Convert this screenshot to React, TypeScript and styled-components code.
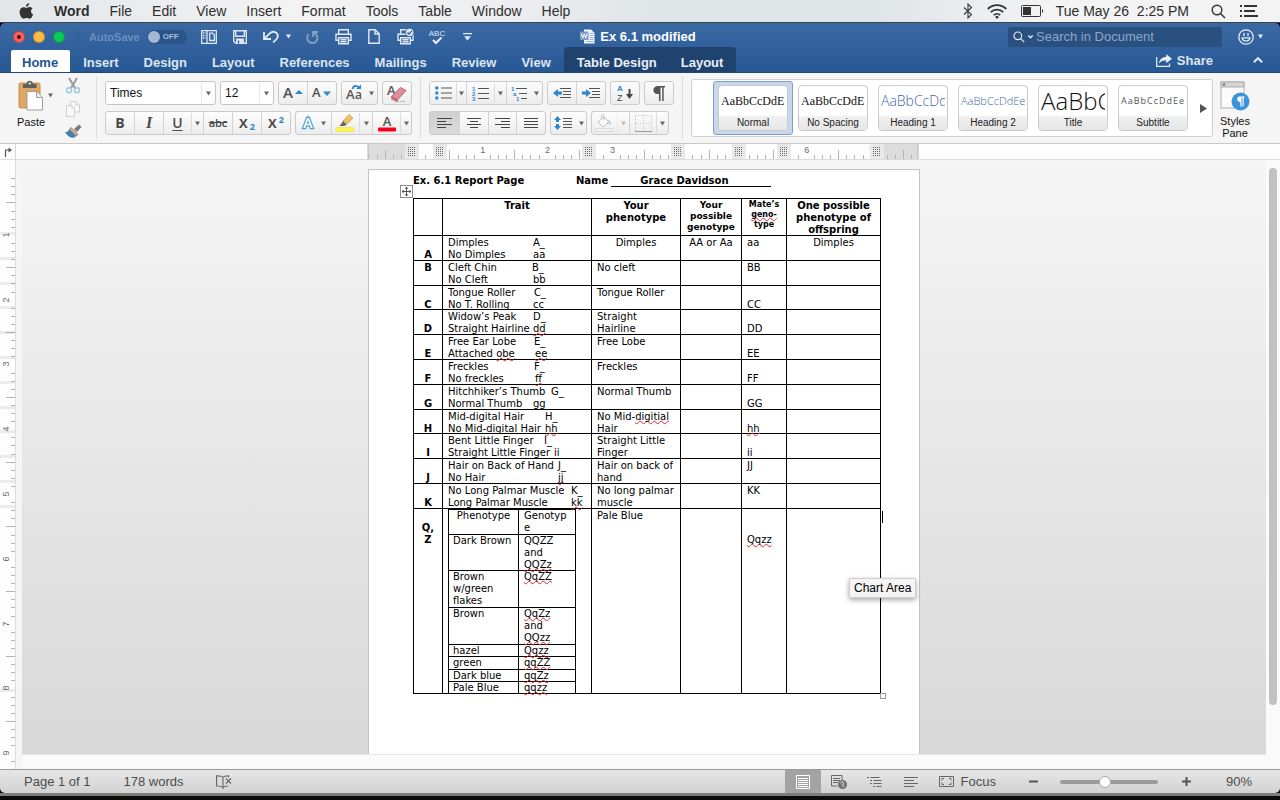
import React from "react";
import styled, { createGlobalStyle, css } from "styled-components";

const ui = `"Liberation Sans", Arial, Helvetica, sans-serif`;
const doc = `"DejaVu Sans", Verdana, sans-serif`;
const humanist = `"Open Sans", sans-serif`;

const GlobalStyle = createGlobalStyle`
  * { box-sizing: border-box; }
  body { margin: 0; background: #0b0c0a; font-family: ${ui}; overflow: hidden; }
  button, input, select { font: inherit; color: inherit; margin: 0; }
  button { border: 0; background: none; padding: 0; }
  svg { display: block; flex: none; overflow: visible; }
`;

const Shell = styled.div`
  display: flex;
  flex-direction: column;
  height: 100vh;
`;

/* ---------- system menu bar ---------- */

const MenuBar = styled.nav`
  display: flex;
  align-items: center;
  height: 23px;
  flex: none;
  padding: 0 22px 0 19px;
  font-size: 14px;
  color: #2e2e2e;
  border-bottom: 1px solid #3c434b;
  background: linear-gradient(90deg, #e2e6e9 0%, #f3f3f3 24%, #eceef0 40%, #dfe4e7 52%, #dfe4e7 68%, #f3f3f3 82%, #f3f3f3 100%);
`;

const MenuItem = styled.button<{ $bold?: boolean }>`
  margin-left: 20px;
  font-weight: ${(p) => (p.$bold ? 700 : 400)};
`;

const MenuExtras = styled.div`
  display: flex;
  align-items: center;
  gap: 14px;
  margin-left: auto;
  white-space: pre;
`;

const Clock = styled.span`
  margin: 0 8px 0 -2px;
`;

/* ---------- window title and tabs ---------- */

const Header = styled.header`
  flex: none;
  color: #dbe5f1;
  border-radius: 5px 5px 0 0;
  background: linear-gradient(#3a69a4, #285894);
  border-bottom: 1px solid #1e4678;
`;

const TitleRow = styled.div`
  display: grid;
  grid-template-columns: 1fr auto 1fr;
  align-items: center;
  height: 27px;
  padding: 0 17px 0 13px;
`;

const QuickBar = styled.div`
  display: flex;
  align-items: center;
`;

const Light = styled.button<{ $color: string }>`
  display: grid;
  place-items: center;
  width: 12px;
  height: 12px;
  margin-right: 8px;
  border-radius: 50%;
  background: ${(p) => p.$color};
  border: 1px solid rgba(0, 0, 0, 0.2);
`;

const LightDot = styled.span`
  width: 4px;
  height: 4px;
  border-radius: 50%;
  background: #4d0b08;
`;

const BarDivider = styled.span`
  width: 1px;
  height: 16px;
  margin: 0 10px 0 5px;
  background: #2f5a92;
`;

const AutoSave = styled.label`
  display: flex;
  align-items: center;
  gap: 7px;
  margin-right: 14px;
  font-size: 11px;
  font-weight: 700;
  color: #6b8fbd;
`;

const ToggleInput = styled.input`
  appearance: none;
  position: absolute;
  width: 40px;
  height: 14px;
  opacity: 0;
`;

const Toggle = styled.span`
  display: flex;
  align-items: center;
  gap: 3px;
  width: 40px;
  height: 14px;
  padding: 0 1px;
  border-radius: 7px;
  background: #2b5489;
  color: #a9bdd8;
  font-size: 8px;
  font-weight: 700;

  &::before {
    content: "";
    width: 12px;
    height: 12px;
    border-radius: 50%;
    background: #a3b7d3;
  }
`;

const QuickButton = styled.button<{ $w: number; $faded?: boolean }>`
  display: grid;
  place-items: center;
  width: ${(p) => p.$w}px;
  height: 20px;
  opacity: ${(p) => (p.$faded ? 0.45 : 1)};
`;

const WindowTitle = styled.h1`
  display: flex;
  align-items: center;
  gap: 5px;
  margin: 0;
  font-size: 13px;
  font-weight: 700;
  color: #fff;
`;

const TitleTools = styled.div`
  display: flex;
  align-items: center;
  justify-content: flex-end;
`;

const SearchBox = styled.label`
  display: flex;
  align-items: center;
  gap: 3px;
  width: 214px;
  height: 20px;
  margin-right: 16px;
  padding: 0 5px;
  border-radius: 3px;
  background: #2a507f;
`;

const SearchInput = styled.input`
  flex: 1;
  min-width: 0;
  border: 0;
  padding: 0;
  background: none;
  font-size: 13px;
  &::placeholder { color: #8ea7c6; opacity: 1; }
`;

const FeedbackButton = styled.button`
  display: flex;
  align-items: center;
  gap: 4px;
`;

const TabRow = styled.div`
  display: flex;
  align-items: stretch;
  height: 22px;
  padding: 0 16px 0 11px;
  font-size: 13px;
  font-weight: 700;
`;

const TabList = styled.div`
  display: flex;
  gap: 1px;
`;

const Tab = styled.button<{ $active?: boolean }>`
  padding: 2px 12px 0;
  ${(p) =>
    p.$active &&
    css`
      padding: 2px 12px 0 11px;
      background: #fff;
      color: #24538f;
      border-radius: 2px 2px 0 0;
    `}
`;

const ContextTabs = styled.div`
  display: flex;
  margin-top: -3px;
  padding: 3px 1px 0;
  border-radius: 4px 4px 0 0;
  background: #20426f;
  color: #e9eff7;
`;

const ShareButton = styled.button`
  display: flex;
  align-items: center;
  gap: 5px;
  margin: 0 39px 2px auto;
`;

const CollapseButton = styled.button`
  display: grid;
  place-items: center;
  width: 12px;
  margin-bottom: 2px;
`;

/* ---------- ribbon ---------- */

const Ribbon = styled.section`
  display: flex;
  flex: none;
  height: 71px;
  background: #f5f5f5;
  border-bottom: 1px solid #c9c9c9;
  color: #111;
`;

const PasteButton = styled.button`
  display: flex;
  flex-direction: column;
  align-items: center;
  justify-content: space-between;
  width: 44px;
  margin: 7px 0 14px 9px;
  font-size: 11px;
  line-height: 13px;
`;

const PasteCaret = styled.button`
  width: 8px;
  margin: 0 14px 0 -5px;
  padding-bottom: 26px;
`;

const ClipColumn = styled.div`
  display: flex;
  flex-direction: column;
  justify-content: space-between;
  width: 18px;
  margin: 4px 5px 4px -5px;
`;

const Divider = styled.span`
  width: 1px;
  margin: 4px 8px;
  background: #dedede;
`;

const Rows = styled.div`
  display: flex;
  flex-direction: column;
  gap: 6px;
  padding-top: 8px;
`;

const Row = styled.div`
  display: flex;
  gap: 4px;
`;

const SelectBox = styled.label<{ $w: number; $sep: number }>`
  display: grid;
  grid-template-columns: 1fr ${(p) => p.$sep}px;
  align-items: center;
  width: ${(p) => p.$w}px;
  height: 24px;
  border: 1px solid #c6c6c6;
  border-radius: 3px;
  background: #fff;
`;

const Select = styled.select`
  grid-area: 1 / 1 / 2 / 3;
  appearance: none;
  width: 100%;
  padding: 0 4px;
  border: 0;
  background: none;
  font-size: 12px;
`;

const SelectArrow = styled.span`
  grid-area: 1 / 2 / 2 / 3;
  display: grid;
  place-items: center;
  height: 20px;
  border-left: 1px solid #e6e6e6;
  pointer-events: none;
`;

const Group = styled.div`
  display: flex;
  height: 24px;
  border: 1px solid #cbcbcb;
  border-radius: 3px;
  background: linear-gradient(#fdfdfd, #ececec);
`;

const Tool = styled.button<{ $w: number; $sel?: boolean }>`
  display: flex;
  align-items: center;
  justify-content: center;
  gap: 6px;
  width: ${(p) => p.$w}px;
  color: #444;
  border-left: 1px solid #d3d3d3;
  &:first-child { border-left: 0; border-radius: 2px 0 0 2px; }
  ${(p) => p.$sel && css`background: linear-gradient(#cfcfcf, #dadada);`}
`;

const Drop = styled.button<{ $w: number; $faded?: boolean }>`
  display: grid;
  place-items: center;
  width: ${(p) => p.$w}px;
  margin: 1px 0;
  border-left: 1px solid #dcdcdc;
  opacity: ${(p) => (p.$faded ? 0.4 : 1)};
`;

const Gallery = styled.div`
  display: flex;
  align-items: center;
  flex: 1;
  height: 58px;
  margin: 6px 5px 0 0;
  padding: 0 5px 0 21px;
  border: 1px solid #cfcfcf;
  border-radius: 3px;
  background: #fff;
`;

const StyleSlot = styled.button<{ $sel?: boolean }>`
  flex: none;
  width: 80px;
  height: 54px;
  padding: 3px 4px 4px;
  border-radius: 3px;
  border: 1px solid ${(p) => (p.$sel ? "#7c9fcf" : "transparent")};
  background: ${(p) => (p.$sel ? "#c9d7ea" : "none")};
`;

const StyleCard = styled.span`
  display: flex;
  flex-direction: column;
  height: 46px;
  border: 1px solid #cacaca;
  border-radius: 4px;
  overflow: hidden;
  background: #fff;
`;

const Preview = styled.span<{ $font: string; $size: number; $color: string; $weight?: number; $track?: number }>`
  flex: 1;
  margin: 0 2px;
  overflow: hidden;
  white-space: nowrap;
  text-align: left;
  line-height: 30px;
  font-family: ${(p) => p.$font};
  font-size: ${(p) => p.$size}px;
  font-weight: ${(p) => p.$weight ?? 400};
  color: ${(p) => p.$color};
  letter-spacing: ${(p) => p.$track ?? 0}px;
`;

const StyleName = styled.span`
  height: 14px;
  line-height: 14px;
  font-size: 10px;
  color: #222;
  background: linear-gradient(#f1f1f1, #e6e6e6);
`;

const MoreStyles = styled.button`
  margin-left: auto;
`;

const StylesPane = styled.button`
  display: flex;
  flex-direction: column;
  align-items: center;
  gap: 4px;
  width: 34px;
  margin: 8px 28px 0 0;
  font-size: 11px;
  line-height: 12px;
`;

/* ---------- rulers and canvas ---------- */

const RulerBar = styled.div`
  display: flex;
  flex: none;
  height: 16px;
  background: #fdfdfd;
  border-bottom: 1px solid #dcdcdc;
`;

const TabStop = styled.button`
  display: grid;
  place-items: center;
  width: 16px;
  border-right: 1px solid #d8d8d8;
`;

const RulerTrack = styled.div`
  display: flex;
  justify-content: center;
  flex: 1;
  margin: 0 14px 0 6px;
`;

const Workspace = styled.main`
  display: flex;
  flex: 1;
  min-height: 0;
`;

const SideRuler = styled.div`
  flex: none;
  width: 16px;
  overflow: hidden;
  background: #fdfdfd;
  border-right: 1px solid #dcdcdc;
`;

const CanvasColumn = styled.div`
  display: flex;
  flex-direction: column;
  flex: 1;
  min-width: 0;
  padding-left: 6px;
  background: #f5f5f5;
`;

const Canvas = styled.div`
  display: flex;
  justify-content: center;
  flex: 1;
  min-height: 0;
  overflow: hidden;
  padding-top: 9px;
  background: linear-gradient(#f5f5f5, #d8d8d8);
`;

const ScrollStrip = styled.div`
  height: 15px;
  flex: none;
  background: #fafafa;
  border-top: 1px solid #e6e6e6;
`;

const ScrollTrack = styled.div`
  flex: none;
  width: 14px;
  padding: 8px 3px 64px;
  background: #fafafa;
`;

const ScrollThumb = styled.div`
  height: 100%;
  border-radius: 4px;
  background: #c1c1c1;
`;

/* ---------- document ---------- */

const Paper = styled.article`
  position: relative;
  width: 552px;
  height: 720px;
  flex: none;
  padding: 5px 0 0 44px;
  border: 1px solid #c4c4c4;
  background: #fff;
  font-family: ${doc};
  font-size: 10px;
  line-height: 12px;
  color: #000;
`;

const ReportLine = styled.div`
  display: flex;
  margin-bottom: 11px;
  height: 12px;
  font-weight: 700;
`;

const ReportTitle = styled.span`
  width: 163px;
`;

const NameField = styled.span`
  width: 160px;
  height: 12px;
  margin-left: 3px;
  padding-left: 29px;
  border-bottom: 1px solid #000;
`;

const TraitTable = styled.table`
  table-layout: fixed;
  width: 468px;
  border-spacing: 0;
  border: solid #000;
  border-width: 1px 0 0 1px;
`;

const EyeTable = styled(TraitTable)`
  width: 128px;
  & tr:last-child > td { border-bottom: 0; }
`;

const cell = css`
  padding: 1px 5px 0;
  border: solid #000;
  border-width: 0 1px 1px 0;
  vertical-align: top;
  white-space: nowrap;
`;

const Head = styled.th<{ $size?: number; $line?: number }>`
  ${cell}
  padding: 1px 0 0;
  font-size: ${(p) => p.$size ?? 10}px;
  line-height: ${(p) => p.$line ?? 12}px;
`;

const Cell = styled.td<{ $center?: boolean }>`
  ${cell}
  text-align: ${(p) => (p.$center ? "center" : "left")};
`;

const NestCell = styled(Cell)`
  padding: 0 5px;
`;

const EyeCell = styled(Cell)`
  padding: 0 4px;
`;

const GeneCell = styled(Cell)`
  padding: 0 4px 0 5px;
`;

const KeyCell = styled.th`
  ${cell}
  text-align: center;
`;

const CellBody = styled.div<{ $h: number }>`
  height: ${(p) => p.$h}px;
`;

const TraitLine = styled.div`
  display: flex;
`;

const TraitName = styled.span<{ $stop: number }>`
  width: ${(p) => p.$stop}px;
`;

const Misspelled = styled.span`
  text-decoration: underline wavy #e0262b 1px;
  text-decoration-skip-ink: none;
  text-underline-offset: 0;
`;

const MoveHandle = styled.span`
  position: absolute;
  left: 31px;
  top: 15px;
  display: grid;
  place-items: center;
  width: 13px;
  height: 13px;
  border: 1px solid #8d8d8d;
  background: #fff;
`;

const ResizeHandle = styled.span`
  position: absolute;
  left: 511px;
  top: 523px;
  width: 6px;
  height: 6px;
  border: 1px solid #9a9a9a;
  background: #fff;
`;

const Caret = styled.span`
  position: absolute;
  left: 513px;
  top: 341px;
  width: 1px;
  height: 12px;
  background: #000;
`;

const Tooltip = styled.span`
  position: absolute;
  left: 480px;
  top: 408px;
  padding: 0 4px;
  border: 1px solid #cfcfcf;
  background: #f4f4f4;
  box-shadow: 0 2px 5px rgba(0, 0, 0, 0.35);
  font-family: ${ui};
  font-size: 12px;
  line-height: 18px;
`;

/* ---------- status bar ---------- */

const StatusBar = styled.footer`
  display: flex;
  align-items: center;
  flex: none;
  height: 24px;
  padding: 0 28px 0 24px;
  font-size: 13px;
  color: #4c4c4c;
  border-top: 1px solid #9a9a9a;
  background: linear-gradient(#e6e6e6, #d2d2d2);
  border-radius: 0 0 5px 5px;
`;

const StatusButton = styled.button`
  margin-right: 33px;
`;

const ViewButtons = styled.div`
  display: flex;
  align-self: stretch;
  margin-left: auto;
`;

const ViewButton = styled.button<{ $sel?: boolean }>`
  display: grid;
  place-items: center;
  width: 36px;
  background: ${(p) => (p.$sel ? "#a3a3a3" : "none")};
`;

const FocusButton = styled.button`
  display: flex;
  align-items: center;
  gap: 7px;
  margin: 0 33px 0 10px;
`;

const ZoomSlider = styled.input`
  appearance: none;
  width: 98px;
  height: 4px;
  margin: 0 24px 0 22px;
  border-radius: 2px;
  background: #9b9b9b;
  &::-webkit-slider-thumb {
    appearance: none;
    width: 12px;
    height: 12px;
    border-radius: 50%;
    background: #fff;
    border: 1px solid #a5a5a5;
  }
`;

const ZoomValue = styled.button`
  margin-left: 35px;
`;

const DesktopEdge = styled.div`
  flex: none;
  height: 7px;
  border-top: 3px solid #7d7d7d;
  background: #0b0c0a;
`;

/* ---------- drawings ---------- */

const Down = ({ c = "#666", s = 6 }: { c?: string; s?: number }) => (
  <svg width={s} height="5" viewBox="0 0 6 5"><path d="M0 0h6L3 5z" fill={c} /></svg>
);

const Apple = () => (
  <svg width="15" height="17" viewBox="0 0 15 17" fill="#333">
    <path d="M10.2 0c.1 1.900-1.400 3.700-3.200 3.700C6.800 1.900 8.500.200 10.200 0zM7.300 4.900c.8 0 1.800-.9 3.300-.9 1.200 0 2.300.7 3 1.600-2.300 1.400-2 4.700.5 5.800-.5 1.500-2 4.400-3.700 4.400-1.100 0-1.500-.7-2.800-.7s-1.800.7-2.800.7C2.600 15.800.6 12 .6 9.100.600 6 2.500 4.200 4.500 4.200c1.200 0 2 .7 2.800.7z" />
  </svg>
);

const Bluetooth = () => (
  <svg width="10" height="16" viewBox="0 0 10 16" fill="none" stroke="#3a3a3a" strokeWidth="1.100">
    <path d="M1 4.500l7.500 7L5 15V1l3.500 3.500-7.500 7" />
  </svg>
);

const Wifi = () => (
  <svg width="20" height="15" viewBox="0 0 20 15" fill="none" stroke="#333" strokeWidth="1.800">
    <path d="M.8 5a13 13 0 0 1 18.400 0M3.800 8.200a8.700 8.700 0 0 1 12.400 0M6.800 11.200a4.600 4.600 0 0 1 6.400 0" />
    <circle cx="10" cy="13.200" r="1.400" fill="#333" stroke="none" />
  </svg>
);

const Battery = () => (
  <svg width="23" height="12" viewBox="0 0 23 12">
    <rect x=".5" y=".5" width="19" height="11" rx="1" fill="none" stroke="#333" />
    <rect x="2" y="2" width="8" height="8" fill="#333" />
    <path d="M21 4c1.500.500 1.500 3.500 0 4z" fill="#333" />
  </svg>
);

const Lens = ({ c = "#333", s = 15 }: { c?: string; s?: number }) => (
  <svg width={s} height={s} viewBox="0 0 15 15" fill="none" stroke={c} strokeWidth="1.400">
    <circle cx="6" cy="6" r="4.800" /><path d="M9.500 9.500l4.500 4.500" />
  </svg>
);

const Notices = () => (
  <svg width="18" height="12" viewBox="0 0 18 12" fill="#333">
    <path d="M0 0h2v2H0zM0 5h2v2H0zM0 10h2v2H0zM4 0h13v2H4zM4 5h11v2H4zM4 10h14v2H4z" />
  </svg>
);

const PanelIcon = () => (
  <svg width="16" height="14" viewBox="0 0 16 14" fill="none" stroke="#dfe8f3" strokeWidth="1.300">
    <path d="M.7.7h14.600v12.600H.7z" /><path d="M2 3h2.500M2 5.500h2.500M2 8h2.500" strokeDasharray="1.200 .6" />
    <path d="M6 .7v12.600M8.700 3.200h2.800l1.800 1.800v5.500H8.700z" />
  </svg>
);

const SaveIcon = () => (
  <svg width="14" height="14" viewBox="0 0 14 14" fill="none" stroke="#dfe8f3" strokeWidth="1.400">
    <path d="M.7.7h12.600v12.600H2.700l-2-2z" /><path d="M2.700.7v5.600h8.600V.7" />
    <path d="M3.700 13.300V9.300h6.600v4z" fill="#dfe8f3" /><path d="M5.500 10.500v3" stroke="#33619c" />
  </svg>
);

const UndoIcon = () => (
  <svg width="16" height="13" viewBox="0 0 16 13" fill="none" stroke="#e3ebf5" strokeWidth="1.800">
    <path d="M1 2v7h7M1.500 8.500L7 3.200C10.500.200 15 2.500 14.800 6.500 14.600 9 12.500 10.500 10 12.300" />
  </svg>
);

const RedoIcon = () => (
  <svg width="13" height="14" viewBox="0 0 13 14" fill="none" stroke="#dfe8f3" strokeWidth="1.800">
    <path d="M2.500 4C-.5 7.500 2 13 6.500 13S13 7.500 10 4.500L8 2.500M7 7V2h5" />
  </svg>
);

const PrintIcon = ({ check }: { check?: boolean }) => (
  <svg width="17" height="17" viewBox="0 0 17 17" fill="none" stroke="#dfe8f3" strokeWidth="1.400">
    <path d="M3.700 5.500V1.700h9.600v3.800M3.500 12.300H1V6.200h15v6.100h-2.500" />
    <path d="M3.700 9.700h9.600v6H3.700zM5.500 11.700h6M5.500 13.700h6" />
    {check && (
      <>
        <circle cx="12.600" cy="4.400" r="4.200" fill="#dfe8f3" stroke="#33619c" strokeWidth=".8" />
        <path d="M10.500 4.500l1.600 1.600 2.800-3.200" stroke="#33619c" />
      </>
    )}
  </svg>
);

const DocIcon = () => (
  <svg width="12" height="15" viewBox="0 0 12 15" fill="none" stroke="#dfe8f3" strokeWidth="1.400">
    <path d="M.8.8h6.400l4 4v9.400H.8z" /><path d="M7 1v4h4" />
  </svg>
);

const SpellIcon = () => (
  <svg width="18" height="16" viewBox="0 0 18 16">
    <text x="9" y="6.500" textAnchor="middle" fontSize="8" fontFamily={ui} fill="#dfe8f3">ABC</text>
    <path d="M5 11l3 3 5.500-5.500" fill="none" stroke="#e8eef7" strokeWidth="2" />
  </svg>
);

const CustomizeIcon = () => (
  <svg width="9" height="8" viewBox="0 0 9 8" fill="#e3ebf5"><path d="M0 0h9v1.300H0zM1 3.200h7L4.500 7.500z" /></svg>
);

const WordDoc = () => (
  <svg width="15" height="15" viewBox="0 0 15 15">
    <path d="M4 .5h7l3.500 3.500v10.500H4z" fill="#f5f8fc" />
    <path d="M9.500 4.500h4M9.500 6.500h4M9.500 8.500h4M9.500 10.500h4M6 12.500h7.500" stroke="#7f9cc4" strokeWidth=".8" />
    <path d="M0 2.500h8.500v8.500H0z" fill="#7d9dcb" />
    <path d="M1.300 4.500l1.400 4.500 1.500-4 1.500 4 1.400-4.500" fill="none" stroke="#fff" strokeWidth="1" />
  </svg>
);

const Smiley = () => (
  <svg width="16" height="16" viewBox="0 0 16 16" fill="none" stroke="#e8eef7" strokeWidth="1.300">
    <circle cx="8" cy="8" r="7.200" /><path d="M4.200 8.800c.5 4.200 7.100 4.200 7.600 0z" /><path d="M6 4v3M10 4v3" />
  </svg>
);

const ShareIcon = () => (
  <svg width="16" height="13" viewBox="0 0 16 13">
    <path d="M.7 3v9.300h12.800V9.500" fill="none" stroke="#dfe8f3" strokeWidth="1.300" />
    <path d="M3 9.500c.5-4 3-6.500 7.200-6.500V.3L16 4.800l-5.800 4.500V6.500C7 6.500 5 7 3 9.500z" fill="#e8eef7" />
  </svg>
);

const PasteIcon = () => (
  <svg width="26" height="31" viewBox="0 0 26 31">
    <rect x="1" y="3" width="21" height="25" rx="1.500" fill="#dfa765" stroke="#c98f4c" />
    <path d="M5 8V4h3.500C8.500-.5 15-.5 15 4h3.500v4z" fill="#5d5d5d" /><circle cx="11.800" cy="3.500" r="1.200" fill="#d8d8d8" />
    <path d="M9 11.500h9.500l6 6V30H9z" fill="#fff" stroke="#9d9d9d" /><path d="M18.500 11.500v6h6" fill="#eee" stroke="#9d9d9d" />
  </svg>
);

const CutIcon = () => (
  <svg width="16" height="17" viewBox="0 0 16 17" fill="none">
    <path d="M4 1l6 10M12 1L6 11" stroke="#9a9a9a" strokeWidth="2" />
    <circle cx="4" cy="13.200" r="2.500" stroke="#a3c6e8" strokeWidth="1.500" /><circle cx="12" cy="13.200" r="2.500" stroke="#a3c6e8" strokeWidth="1.500" />
  </svg>
);

const CopyIcon = () => (
  <svg width="16" height="16" viewBox="0 0 16 16" fill="#f8f8f8" stroke="#cfcfcf">
    <path d="M5.500.5H11l3.500 3.500v7h-9z" /><path d="M1.500 4.500H7L9.500 7v8.500h-8z" /><path d="M11 .5V4h3.500M7 4.500V7h2.500" />
  </svg>
);

const BrushIcon = () => (
  <svg width="17" height="15" viewBox="0 0 17 15">
    <path d="M9 5l5-4.500L16.500 3 12 8z" fill="#777" /><path d="M6 3.500l7 7-2 1.500-7-6z" fill="#c9b08c" stroke="#666" strokeWidth=".7" />
    <path d="M4.500 6l6 6.200C8 14.500 4 13.500.5 8.500 2 8.700 3.500 7.500 4.500 6z" fill="#3f7fc0" stroke="#355f8d" strokeWidth=".6" />
  </svg>
);

const LetterArrow = ({ up }: { up?: boolean }) => (
  <svg width="21" height="16" viewBox="0 0 21 16">
    <text x="0" y={up ? 13 : 12} fontSize={up ? 15 : 13} fontWeight="600" fontFamily={humanist} fill="#505050">A</text>
    <path d={up ? "M12 9h8L16 5z" : "M11 6.500h8l-4 4.500z"} fill="#2a86cf" />
  </svg>
);

const CaseIcon = () => (
  <svg width="17" height="18" viewBox="0 0 17 18">
    <text x="0" y="15" fontSize="13" fontWeight="600" fontFamily={humanist} fill="#555">A</text>
    <text x="9" y="15" fontSize="12" fontWeight="600" fontFamily={humanist} fill="#555">a</text>
    <path d="M6.500 5c1-4 5-4 6.500-1" fill="none" stroke="#2a86cf" strokeWidth="1.800" /><path d="M10 5h5V.500z" fill="#2a86cf" />
  </svg>
);

const EraserIcon = () => (
  <svg width="22" height="20" viewBox="0 0 22 20">
    <text x="1" y="12" fontSize="13" fontWeight="600" fontFamily={humanist} fill="#555">A</text>
    <path d="M5.500 13.500l9-9 5.500 3-8.500 9.500z" fill="#e08c9a" stroke="#b4596c" strokeWidth=".8" />
    <path d="M5.500 13.500l6 3.500v2l-6-3z" fill="#c96f82" stroke="#b4596c" strokeWidth=".6" /><path d="M13 18.500h6" stroke="#bbb" />
  </svg>
);

const Glyph = styled.span<{ $size?: number; $line?: boolean; $weight?: number }>`
  font-family: ${humanist};
  font-weight: ${(p) => p.$weight ?? 700};
  font-size: ${(p) => p.$size ?? 14}px;
  line-height: 20px;
  text-decoration: ${(p) => (p.$line ? "line-through" : "none")};
  color: #4a4a4a;
`;

const Italic = styled(Glyph)`
  font-family: "Liberation Serif", serif;
  font-style: italic;
  font-size: 16px;
`;

const Underlined = styled(Glyph)`
  font-weight: 600;
  text-decoration: underline;
  text-underline-offset: 2px;
`;

const ScriptDigit = styled.span<{ $up?: boolean }>`
  margin-left: -4px;
  padding: ${(p) => (p.$up ? "0 0 7px" : "7px 0 0")};
  font-family: ${humanist};
  font-weight: 700;
  font-size: 9px;
  line-height: 13px;
  color: #2a86cf;
`;

const OutlineA = () => (
  <svg width="14" height="16" viewBox="0 0 14 16">
    <text x="7" y="13" textAnchor="middle" fontSize="14" fontWeight="600" fontFamily={humanist} fill="#fff" stroke="#4a9bdb" strokeWidth="2.500" paintOrder="stroke">A</text>
  </svg>
);

const HighlightIcon = () => (
  <svg width="19" height="18" viewBox="0 0 19 18">
    <path d="M7 7l6-6.500L17 4l-6.500 6.500z" fill="#eebf63" stroke="#c99a3e" strokeWidth=".7" />
    <path d="M7 7l3.500 3.500-2 1.500H3.500L5.500 9.500z" fill="#666" /><rect y="13.500" width="18" height="4" rx="1" fill="#fbf651" stroke="#e6df3a" strokeWidth=".6" />
  </svg>
);

const FontColorIcon = () => (
  <svg width="18" height="18" viewBox="0 0 18 18">
    <text x="9" y="11.500" textAnchor="middle" fontSize="13" fontWeight="600" fontFamily={humanist} fill="#555">A</text>
    <rect y="13.500" width="18" height="4" rx="1" fill="#f9001a" />
  </svg>
);

const BulletsIcon = () => (
  <svg width="17" height="14" viewBox="0 0 17 14">
    <path d="M6 2h11M6 7h11M6 12h11" stroke="#555" strokeWidth="1.200" />
    <circle cx="1.800" cy="2" r="1.700" fill="#2a86cf" /><circle cx="1.800" cy="7" r="1.700" fill="#2a86cf" /><circle cx="1.800" cy="12" r="1.700" fill="#2a86cf" />
  </svg>
);

const NumbersIcon = () => (
  <svg width="17" height="15" viewBox="0 0 17 15">
    <path d="M6 2.500h11M6 7.500h11M6 12.500h11" stroke="#555" strokeWidth="1.200" />
    <g fontSize="6" fontWeight="700" fontFamily={ui} fill="#2a86cf"><text x="0" y="4.500">1</text><text x="0" y="9.700">2</text><text x="0" y="14.900">3</text></g>
  </svg>
);

const MultiIcon = () => (
  <svg width="17" height="15" viewBox="0 0 17 15">
    <path d="M5 2.500h11M8 7.500h8M10 12.500h6" stroke="#555" strokeWidth="1.200" />
    <g fontSize="6" fontWeight="700" fontFamily={ui} fill="#2a86cf"><text x="0" y="4.500">1</text><text x="2" y="9.500">a</text><text x="5" y="14.900">1</text></g>
  </svg>
);

const IndentIcon = ({ right }: { right?: boolean }) => (
  <svg width="18" height="12" viewBox="0 0 18 12">
    <path d="M7 1.500h11M10 4.500h8M10 7.500h8M7 10.500h11" stroke="#555" strokeWidth="1.200" />
    <path d={right ? "M0 4.500h4V2l5 4-5 4V7.500H0z" : "M9 4.500H5V2L0 6l5 4V7.500h4z"} fill="#2a86cf" />
  </svg>
);

const SortIcon = () => (
  <svg width="17" height="18" viewBox="0 0 17 18">
    <text x="0" y="7" fontSize="8" fontFamily={ui} fontWeight="700" fill="#2a86cf">A</text>
    <text x="0" y="17" fontSize="9" fontFamily={ui} fill="#444">Z</text>
    <path d="M12.500 5v7" stroke="#444" strokeWidth="2" /><path d="M9 10h7l-3.500 5z" fill="#444" />
  </svg>
);

const ParagraphMark = () => (
  <svg width="12" height="15" viewBox="0 0 12 15" fill="#555">
    <path d="M5 0h7v1.500h-1.300V15H9.200V1.500H7.500V15H6V8H4.500C-1 8-1 0 5 0z" />
  </svg>
);

const alignLines: Record<string, [number, number][]> = {
  left: [[0, 15], [0, 9], [0, 15], [0, 9]],
  center: [[0, 14], [3, 11], [0, 14], [3, 11]],
  right: [[0, 15], [6, 15], [0, 15], [6, 15]],
  full: [[0, 14], [0, 14], [0, 14], [0, 14]],
};

const AlignIcon = ({ kind }: { kind: string }) => (
  <svg width="15" height="11" viewBox="0 0 15 11">
    {alignLines[kind].map(([a, b], i) => (
      <path key={i} d={`M${a} ${i * 3 + 0.5}h${b - a}`} stroke="#444" />
    ))}
  </svg>
);

const SpacingIcon = () => (
  <svg width="19" height="14" viewBox="0 0 19 14">
    <path d="M9 2.500h9M9 5.500h9M9 8.500h9M9 11.500h9" stroke="#555" strokeWidth="1.200" />
    <path d="M3.500 0L7 4H5v2H2V4H0zM3.500 14L7 10H5V8H2v2H0z" fill="#2a86cf" />
  </svg>
);

const BucketIcon = () => (
  <svg width="19" height="18" viewBox="0 0 19 18" opacity=".7">
    <path d="M3 8l6-5 5 5-6 5z" fill="#fff" stroke="#aaa" /><path d="M9 6V1.500c0-1.500-2.500-1.500-2.500 0V5" fill="none" stroke="#aaa" />
    <path d="M13.500 6c3 1 2.500 4 2 5.500-.8-1.500-2-2.500-4-2z" fill="#9cc3e8" /><rect x=".5" y="14.500" width="17" height="3" fill="#f7f7f7" stroke="#d3d3d3" />
  </svg>
);

const BorderIcon = () => (
  <svg width="17" height="17" viewBox="0 0 17 17" fill="none">
    <path d="M.5.5h16v16H.5zM8.500 0v16M0 8.500h16" stroke="#bdbdbd" strokeDasharray="1 1.700" /><path d="M0 16.500h17" stroke="#999" />
  </svg>
);

const StylesPaneIcon = () => (
  <svg width="30" height="30" viewBox="0 0 30 30">
    <rect x="1" y="1" width="23" height="26" fill="#fafafa" stroke="#adadad" /><path d="M1 1h23v5H1z" fill="#d5d5d5" stroke="#adadad" />
    <circle cx="4" cy="3.500" r="1.300" fill="#777" /><circle cx="20.500" cy="20.500" r="9" fill="#3b93dc" />
    <path d="M19.500 15.500h5v1.200h-.8v8.800h-1.200v-8.800h-1v8.800h-1.200v-4.500c-3.800 0-4-5.500-.8-5.500z" fill="#fff" />
  </svg>
);

const ticks = (from: number, to: number) => Array.from({ length: to - from + 1 }, (_, i) => from + i).filter((n) => n % 8 !== 0);
const EIGHTH = 8.1;

const columnMarkers = [37, 65, 214, 303, 364, 409, 502];
const rowMarkers = [72, 97, 122, 146, 171, 196, 221, 246, 270, 295, 320, 345, 529];

const PageRuler = () => (
  <svg width="552" height="15" viewBox="0 0 552 15">
    <path d="M0 0h51v15H0zM504 0h46v15h-46z" fill="#dcdcdc" />
    <path d="M0 0v15M550 0v15" stroke="#b5b5b5" />
    {ticks(-6, 61).map((n) => (
      <path key={n} d={`M${Math.round(49 + n * EIGHTH) + 0.5} ${n % 4 === 0 ? 6 : 11}V15`} stroke="#b3b3b3" />
    ))}
    {[1, 2, 3, 4, 5, 6, 7].map((n) => (
      <text key={n} x={50 + n * EIGHTH * 8} y="9" textAnchor="middle" fontSize="9" fontFamily={ui} fill="#6a6a6a">{n}</text>
    ))}
    {columnMarkers.map((x) => (
      <g key={x}>
        <rect x={x} y="0" width="14" height="15" fill="#e9e9e9" />
        <path d={`M${x + 3} 3.500h8M${x + 3} 5.500h8M${x + 3} 7.500h8M${x + 3} 9.500h8M${x + 3} 11.500h8`} stroke="#666" strokeDasharray="1 1" />
      </g>
    ))}
  </svg>
);

const HeightRuler = () => (
  <svg width="15" height="620" viewBox="0 0 15 620">
    {rowMarkers.map((y) => <path key={y} d={`M0 ${y}h15v3H0z`} fill="#ebebeb" />)}
    {ticks(0, 76).map((n) => (
      <path key={n} d={`M${n % 4 === 0 ? 6 : 11} ${Math.round(10 + n * EIGHTH) + 0.5}H15`} stroke="#b3b3b3" />
    ))}
    {[1, 2, 3, 4, 5, 6, 7, 8, 9].map((n) => (
      <text key={n} transform={`translate(9 ${Math.round(10 + n * EIGHTH * 8)}) rotate(-90)`} textAnchor="middle" fontSize="9" fontFamily={ui} fill="#6a6a6a">{n}</text>
    ))}
  </svg>
);

const MoveIcon = () => (
  <svg width="9" height="9" viewBox="0 0 9 9" fill="none" stroke="#444">
    <path d="M4.500 0v9M0 4.500h9M3 1.500l1.500-1 1.500 1M3 7.500l1.500 1 1.500-1M1.500 3l-1 1.500 1 1.500M7.500 3l1 1.500-1 1.500" strokeWidth=".9" />
  </svg>
);

const ProofIcon = () => (
  <svg width="16" height="14" viewBox="0 0 16 14" fill="none" stroke="#666" strokeWidth="1.100">
    <path d="M7 12V2.500C6 1 4 .7.600.700V11c3 0 5.400.2 6.400 1.500C8 11.200 9.500 11 12 11M7 2.500C8 1 9.500.700 12.500.700V2.500M7 12v2" />
    <path d="M10 3.500l5 5M15 3.500l-5 5" />
  </svg>
);

const PrintLayout = () => (
  <svg width="14" height="14" viewBox="0 0 14 14" fill="none" stroke="#fff">
    <path d="M.5.5h13v13H.5zM2 3.500h10M2 5.500h10M2 7.500h10M2 9.500h10M2 11.500h10" />
  </svg>
);

const WebLayout = () => (
  <svg width="16" height="14" viewBox="0 0 16 14" fill="none" stroke="#666">
    <path d="M.5.500h10.500v5M.5.500v10.500h6M2 3.500h7M2 5.500h7M2 7.500h5" />
    <circle cx="11.500" cy="9.500" r="4" fill="#777" /><path d="M9.500 8l2-1.500 1 2-1 1.500 1.500 2" stroke="#ddd" />
  </svg>
);

const OutlineView = () => (
  <svg width="15" height="12" viewBox="0 0 15 12" stroke="#666" strokeWidth="1.100">
    <path d="M0 1.500h2M3.500 1.500h9M3 4.500h2M6.500 4.500h8M3 7.500h2M6.500 7.500h8M6 10.500h2M9.500 10.500h5" />
  </svg>
);

const DraftView = () => (
  <svg width="14" height="12" viewBox="0 0 14 12" stroke="#666" strokeWidth="1.100">
    <path d="M0 1.500h14M0 4.500h10M0 7.500h14M0 10.500h10" />
  </svg>
);

const FocusIcon = () => (
  <svg width="15" height="11" viewBox="0 0 15 11" fill="none" stroke="#666">
    <path d="M.5.500h14v10H.5z" /><path d="M3 4.500v-2h2M10 2.500h2v2M12 6.500v2h-2M5 8.500H3v-2" />
  </svg>
);

/* ---------- data ---------- */

const menus = ["File", "Edit", "View", "Insert", "Format", "Tools", "Table", "Window", "Help"];
const tabs = ["Insert", "Design", "Layout", "References", "Mailings", "Review", "View"];

const serif = `"Liberation Serif", "Times New Roman", serif`;

const styleCards = [
  { name: "Normal", text: "AaBbCcDdE", font: serif, size: 12, color: "#111", sel: true },
  { name: "No Spacing", text: "AaBbCcDdE", font: serif, size: 12, color: "#111" },
  { name: "Heading 1", text: "AaBbCcDdEe", font: humanist, size: 14, color: "#3f66a3", weight: 300 },
  { name: "Heading 2", text: "AaBbCcDdEe", font: humanist, size: 11, color: "#3f66a3", weight: 300 },
  { name: "Title", text: "AaBbCc", font: humanist, size: 24, color: "#111", weight: 300 },
  { name: "Subtitle", text: "AaBbCcDdEe", font: humanist, size: 9, color: "#555", track: 1 },
];

type Line = { name: React.ReactNode; gene: React.ReactNode; stop: number };
type Trait = { key: string; h: number; keyTop?: boolean; lines: [Line, Line]; own: React.ReactNode; mate: React.ReactNode; mateTop?: boolean; geno?: string; child?: string; centered?: boolean };

const W = Misspelled;
const line = (name: React.ReactNode, gene: React.ReactNode, stop = 85): Line => ({ name, gene, stop });

const traits: Trait[] = [
  { key: "A", h: 23, lines: [line("Dimples", "A_"), line("No Dimples", "aa")], own: "Dimples", centered: true, geno: "AA or Aa", mate: "aa", mateTop: true, child: "Dimples" },
  { key: "B", h: 23, keyTop: true, lines: [line("Cleft Chin", "B_", 84), line("No Cleft", "bb")], own: "No cleft", mate: "BB", mateTop: true },
  { key: "C", h: 22, lines: [line("Tongue Roller", "C_", 86), line("No T. Rolling", "cc")], own: "Tongue Roller", mate: "CC" },
  { key: "D", h: 23, lines: [line("Widow’s Peak", "D_"), line("Straight Hairline", <W>dd</W>)], own: <>Straight<br />Hairline</>, mate: "DD" },
  { key: "E", h: 23, lines: [line("Free Ear Lobe", "E_", 86), line(<>Attached <W>obe</W></>, <W>ee</W>, 87)], own: "Free Lobe", mate: "EE" },
  { key: "F", h: 23, lines: [line("Freckles", "F_", 86), line("No freckles", <W>ff</W>, 87)], own: "Freckles", mate: "FF" },
  { key: "G", h: 23, lines: [line("Hitchhiker’s Thumb", "G_", 103), line("Normal Thumb", "gg")], own: "Normal Thumb", mate: "GG" },
  { key: "H", h: 22, lines: [line("Mid-digital Hair", "H_", 97), line("No Mid-digital Hair", <W>hh</W>, 97)], own: <>No Mid-<W>digitial</W><br />Hair</>, mate: <W>hh</W> },
  { key: "I", h: 23, lines: [line("Bent Little Finger", "I_", 96), line("Straight Little Finger", "ii", 106)], own: <>Straight Little<br />Finger</>, mate: "ii" },
  { key: "J", h: 23, lines: [line("Hair on Back of Hand", "J_", 110), line("No Hair", <W>jj</W>, 110)], own: <>Hair on back of<br />hand</>, mate: "JJ", mateTop: true },
  { key: "K", h: 23, lines: [line("No Long Palmar Muscle", "K_", 123), line("Long Palmar Muscle", <W>kk</W>, 123)], own: <>No long palmar<br />muscle</>, mate: "KK", mateTop: true },
];

const eyes: { h: number; look: React.ReactNode; gene: React.ReactNode }[] = [
  { h: 35, look: "Dark Brown", gene: <>QQZZ<br />and<br /><W>QQZz</W></> },
  { h: 36, look: <>Brown<br />w/green<br />flakes</>, gene: <W>QqZZ</W> },
  { h: 36, look: "Brown", gene: <><W>QqZz</W><br />and<br /><W>QQzz</W></> },
  { h: 11, look: "hazel", gene: <W>Qqzz</W> },
  { h: 12, look: "green", gene: <W>qqZZ</W> },
  { h: 11, look: "Dark blue", gene: <W>qqZz</W> },
  { h: 11, look: "Pale Blue", gene: <W>qqzz</W> },
];

/* ---------- page ---------- */

export default function App() {
  return (
    <Shell>
      <GlobalStyle />
      <MenuBar>
        <Apple />
        <MenuItem $bold>Word</MenuItem>
        {menus.map((m) => <MenuItem key={m}>{m}</MenuItem>)}
        <MenuExtras>
          <Bluetooth /><Wifi /><Battery />
          <Clock>Tue May 26  2:25 PM</Clock>
          <Lens /><Notices />
        </MenuExtras>
      </MenuBar>

      <Header>
        <TitleRow>
          <QuickBar>
            <Light $color="#fc605b" aria-label="Close"><LightDot /></Light>
            <Light $color="#fdbc40" aria-label="Minimize" />
            <Light $color="#0ac956" aria-label="Zoom" />
            <BarDivider />
            <AutoSave>AutoSave<ToggleInput type="checkbox" aria-label="AutoSave" /><Toggle>OFF</Toggle></AutoSave>
            <QuickButton $w={16} aria-label="Side pane"><PanelIcon /></QuickButton>
            <QuickButton $w={46} aria-label="Save"><SaveIcon /></QuickButton>
            <QuickButton $w={16} aria-label="Undo"><UndoIcon /></QuickButton>
            <QuickButton $w={20} aria-label="Undo list"><Down c="#e3ebf5" s={5} /></QuickButton>
            <QuickButton $w={28} $faded aria-label="Redo"><RedoIcon /></QuickButton>
            <QuickButton $w={34} aria-label="Print"><PrintIcon /></QuickButton>
            <QuickButton $w={27} aria-label="New document"><DocIcon /></QuickButton>
            <QuickButton $w={36} aria-label="Print preview"><PrintIcon check /></QuickButton>
            <QuickButton $w={26} aria-label="Spelling"><SpellIcon /></QuickButton>
            <QuickButton $w={36} aria-label="Customize"><CustomizeIcon /></QuickButton>
          </QuickBar>
          <WindowTitle><WordDoc />Ex 6.1 modified</WindowTitle>
          <TitleTools>
            <SearchBox>
              <Lens c="#e8eef7" s={12} />
              <svg width="5" height="4" viewBox="0 0 5 4" fill="none" stroke="#e8eef7" strokeWidth="1.300"><path d="M.3.500l2.200 2.300L4.700.500" /></svg>
              <SearchInput placeholder="Search in Document" aria-label="Search in Document" />
            </SearchBox>
            <FeedbackButton aria-label="Feedback"><Smiley /><Down c="#e8eef7" s={5} /></FeedbackButton>
          </TitleTools>
        </TitleRow>
        <TabRow>
          <TabList>
            <Tab $active>Home</Tab>
            {tabs.map((t) => <Tab key={t}>{t}</Tab>)}
            <ContextTabs><Tab>Table Design</Tab><Tab>Layout</Tab></ContextTabs>
          </TabList>
          <ShareButton><ShareIcon />Share</ShareButton>
          <CollapseButton aria-label="Collapse ribbon">
            <svg width="10" height="6" viewBox="0 0 10 6" fill="none" stroke="#e3ebf5" strokeWidth="2"><path d="M.8 5.200L5 1.200l4.200 4" /></svg>
          </CollapseButton>
        </TabRow>
      </Header>

      <Ribbon>
        <PasteButton><PasteIcon />Paste</PasteButton>
        <PasteCaret aria-label="Paste options"><Down s={5} /></PasteCaret>
        <ClipColumn>
          <button aria-label="Cut"><CutIcon /></button>
          <button aria-label="Copy"><CopyIcon /></button>
          <button aria-label="Format painter"><BrushIcon /></button>
        </ClipColumn>
        <Divider />
        <Rows>
          <Row>
            <SelectBox $w={111} $sep={14}>
              <Select aria-label="Font"><option>Times</option></Select>
              <SelectArrow><Down s={5} /></SelectArrow>
            </SelectBox>
            <SelectBox $w={54} $sep={14}>
              <Select aria-label="Font size"><option>12</option></Select>
              <SelectArrow><Down s={5} /></SelectArrow>
            </SelectBox>
            <Group>
              <Tool $w={28} aria-label="Grow font"><LetterArrow up /></Tool>
              <Tool $w={29} aria-label="Shrink font"><LetterArrow /></Tool>
            </Group>
            <Group><Tool $w={35} aria-label="Change case"><CaseIcon /><Down s={5} /></Tool></Group>
            <Group><Tool $w={28} aria-label="Clear formatting"><EraserIcon /></Tool></Group>
          </Row>
          <Row>
            <Group>
              <Tool $w={28}><Glyph>B</Glyph></Tool>
              <Tool $w={29}><Italic>I</Italic></Tool>
              <Tool $w={28}><Underlined>U</Underlined></Tool>
              <Drop $w={12} aria-label="Underline styles"><Down s={5} /></Drop>
              <Tool $w={29}><Glyph $size={11} $line $weight={600}>abc</Glyph></Tool>
              <Tool $w={29}><Glyph $size={13}>X</Glyph><ScriptDigit>2</ScriptDigit></Tool>
              <Tool $w={29}><Glyph $size={13}>X</Glyph><ScriptDigit $up>2</ScriptDigit></Tool>
            </Group>
            <Group>
              <Tool $w={35} aria-label="Text effects"><OutlineA /><Down s={5} /></Tool>
              <Tool $w={28} aria-label="Highlight"><HighlightIcon /></Tool>
              <Drop $w={13} aria-label="Highlight colors"><Down s={5} /></Drop>
              <Tool $w={28} aria-label="Font color"><FontColorIcon /></Tool>
              <Drop $w={11} aria-label="Font colors"><Down s={5} /></Drop>
            </Group>
          </Row>
        </Rows>
        <Divider />
        <Rows>
          <Row>
            <Group>
              <Tool $w={26} aria-label="Bullets"><BulletsIcon /></Tool>
              <Drop $w={10} aria-label="Bullet styles"><Down s={5} /></Drop>
              <Tool $w={28} aria-label="Numbering"><NumbersIcon /></Tool>
              <Drop $w={12} aria-label="Number styles"><Down s={5} /></Drop>
              <Tool $w={36} aria-label="Multilevel list"><MultiIcon /><Down s={5} /></Tool>
            </Group>
            <Group>
              <Tool $w={28} aria-label="Decrease indent"><IndentIcon /></Tool>
              <Tool $w={29} aria-label="Increase indent"><IndentIcon right /></Tool>
            </Group>
            <Group><Tool $w={28} aria-label="Sort"><SortIcon /></Tool></Group>
            <Group><Tool $w={28} aria-label="Show marks"><ParagraphMark /></Tool></Group>
          </Row>
          <Row>
            <Group>
              <Tool $w={29} $sel aria-label="Align left"><AlignIcon kind="left" /></Tool>
              <Tool $w={29} aria-label="Center"><AlignIcon kind="center" /></Tool>
              <Tool $w={28} aria-label="Align right"><AlignIcon kind="right" /></Tool>
              <Tool $w={29} aria-label="Justify"><AlignIcon kind="full" /></Tool>
            </Group>
            <Group><Tool $w={35} aria-label="Line spacing"><SpacingIcon /><Down s={5} /></Tool></Group>
            <Group>
              <Tool $w={25} aria-label="Shading"><BucketIcon /></Tool>
              <Drop $w={12} $faded aria-label="Shading colors"><Down s={5} /></Drop>
              <Tool $w={27} aria-label="Borders"><BorderIcon /></Tool>
              <Drop $w={12} aria-label="Border styles"><Down s={5} /></Drop>
            </Group>
          </Row>
        </Rows>
        <Divider />
        <Gallery>
          {styleCards.map((s) => (
            <StyleSlot key={s.name} $sel={s.sel}>
              <StyleCard>
                <Preview $font={s.font} $size={s.size} $color={s.color} $weight={s.weight} $track={s.track}>{s.text}</Preview>
                <StyleName>{s.name}</StyleName>
              </StyleCard>
            </StyleSlot>
          ))}
          <MoreStyles aria-label="More styles">
            <svg width="7" height="9" viewBox="0 0 7 9"><path d="M0 0v9l7-4.500z" fill="#555" /></svg>
          </MoreStyles>
        </Gallery>
        <StylesPane><StylesPaneIcon />Styles Pane</StylesPane>
      </Ribbon>

      <RulerBar>
        <TabStop aria-label="Tab stop">
          <svg width="8" height="10" viewBox="0 0 8 10"><path d="M1.500 10V3H5" fill="none" stroke="#555" strokeWidth="1.200" /><path d="M4.500.500L8 3 4.500 5.500z" fill="#555" /></svg>
        </TabStop>
        <RulerTrack><PageRuler /></RulerTrack>
      </RulerBar>

      <Workspace>
        <SideRuler><HeightRuler /></SideRuler>
        <CanvasColumn>
          <Canvas>
            <Paper>
              <ReportLine>
                <ReportTitle>Ex. 6.1 Report Page</ReportTitle>
                Name
                <NameField>Grace Davidson</NameField>
              </ReportLine>
              <TraitTable>
                <colgroup>
                  <col width="29" /><col width="149" /><col width="89" /><col width="61" /><col width="45" /><col width="94" />
                </colgroup>
                <thead>
                  <tr>
                    <Head />
                    <Head><CellBody $h={35}>Trait</CellBody></Head>
                    <Head><CellBody $h={35}>Your<br />phenotype</CellBody></Head>
                    <Head $size={9} $line={11}>Your<br />possible<br />genotype</Head>
                    <Head $size={8} $line={10}>Mate’s<br /><W>geno-</W><br />type</Head>
                    <Head><CellBody $h={35}>One possible<br />phenotype of<br />offspring</CellBody></Head>
                  </tr>
                </thead>
                <tbody>
                  {traits.map((t) => (
                    <tr key={t.key}>
                      <KeyCell scope="row"><CellBody $h={t.h}>{!t.keyTop && <br />}{t.key}</CellBody></KeyCell>
                      <Cell>
                        <CellBody $h={t.h}>
                          {t.lines.map((l, i) => (
                            <TraitLine key={i}><TraitName $stop={l.stop}>{l.name}</TraitName><span>{l.gene}</span></TraitLine>
                          ))}
                        </CellBody>
                      </Cell>
                      <Cell $center={t.centered}><CellBody $h={t.h}>{t.own}</CellBody></Cell>
                      <Cell $center>{t.geno}</Cell>
                      <Cell><CellBody $h={t.h}>{!t.mateTop && <br />}{t.mate}</CellBody></Cell>
                      <Cell $center>{t.child}</Cell>
                    </tr>
                  ))}
                  <tr>
                    <KeyCell scope="row"><br />Q,<br />Z</KeyCell>
                    <NestCell>
                      <EyeTable>
                        <colgroup><col width="70" /><col width="57" /></colgroup>
                        <tbody>
                          <tr>
                            <EyeCell $center><CellBody $h={24}>Phenotype</CellBody></EyeCell>
                            <GeneCell><CellBody $h={24}>Genotyp<br />e</CellBody></GeneCell>
                          </tr>
                          {eyes.map((e, i) => (
                            <tr key={i}>
                              <EyeCell><CellBody $h={e.h}>{e.look}</CellBody></EyeCell>
                              <GeneCell><CellBody $h={e.h}>{e.gene}</CellBody></GeneCell>
                            </tr>
                          ))}
                        </tbody>
                      </EyeTable>
                    </NestCell>
                    <Cell>Pale Blue</Cell>
                    <Cell />
                    <Cell><br /><br /><W>Qqzz</W></Cell>
                    <Cell />
                  </tr>
                </tbody>
              </TraitTable>
              <MoveHandle><MoveIcon /></MoveHandle>
              <ResizeHandle />
              <Caret />
              <Tooltip role="tooltip">Chart Area</Tooltip>
            </Paper>
          </Canvas>
          <ScrollStrip />
        </CanvasColumn>
        <ScrollTrack><ScrollThumb /></ScrollTrack>
      </Workspace>

      <StatusBar>
        <StatusButton>Page 1 of 1</StatusButton>
        <StatusButton>178 words</StatusButton>
        <StatusButton aria-label="Proofing"><ProofIcon /></StatusButton>
        <ViewButtons>
          <ViewButton $sel aria-label="Print layout"><PrintLayout /></ViewButton>
          <ViewButton aria-label="Web layout"><WebLayout /></ViewButton>
          <ViewButton aria-label="Outline"><OutlineView /></ViewButton>
          <ViewButton aria-label="Draft"><DraftView /></ViewButton>
        </ViewButtons>
        <FocusButton><FocusIcon />Focus</FocusButton>
        <button aria-label="Zoom out"><svg width="9" height="9" viewBox="0 0 9 9"><path d="M0 4.500h9" stroke="#555" strokeWidth="2" /></svg></button>
        <ZoomSlider type="range" min="0" max="100" defaultValue="45" aria-label="Zoom" />
        <button aria-label="Zoom in"><svg width="9" height="9" viewBox="0 0 9 9"><path d="M0 4.500h9M4.500 0v9" stroke="#555" strokeWidth="2" /></svg></button>
        <ZoomValue>90%</ZoomValue>
      </StatusBar>
      <DesktopEdge />
    </Shell>
  );
}
